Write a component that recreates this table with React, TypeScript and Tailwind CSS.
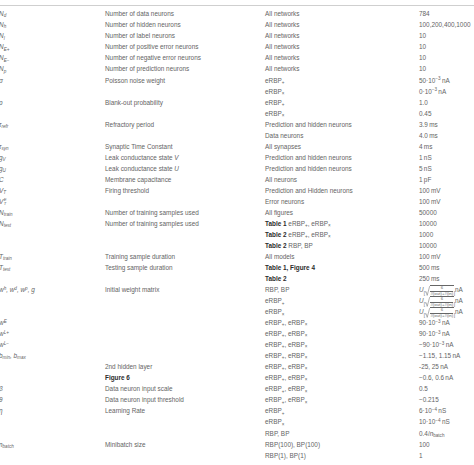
import type { ReactNode } from "react"

const Sb = ({ children, i = true }: { children: ReactNode; i?: boolean }) => (
  <sub className={`text-[4.6px] ${i ? "italic" : ""}`}>{children}</sub>
)
const Sp = ({ children }: { children: ReactNode }) => <sup className="text-[4.6px] italic">{children}</sup>

const Ep = () => (
  <>
    eRBP<Sb i={false}>+</Sb>
  </>
)
const Ex = () => (
  <>
    eRBP<Sb i={false}>×</Sb>
  </>
)
const Both = () => (
  <>
    <Ep />, <Ex />
  </>
)
const B = ({ children }: { children: ReactNode }) => <b className="font-bold text-[#2b2b2b]">{children}</b>

const Sym = ({ v, s }: { v: string; s: string }) => (
  <span className="italic">
    {v}
    <Sb>{s}</Sb>
  </span>
)

const Pow = ({ m, e, u }: { m: string; e: string; u: string }) => (
  <>
    {m}·10<sup className="text-[4.6px]">{e}</sup>
    {"\u2009"}
    {u}
  </>
)

function Uniform() {
  return (
    <span className="inline-flex items-center whitespace-nowrap">
      <i>U</i>
      <span className="text-[4.6px] self-end">[</span>
      <svg width="5" height="10" viewBox="0 0 5 10" className="shrink-0">
        <path d="M0 6.2 L1.1 5.6 L2.2 9.4 L4.6 0.4 L5 0.4" fill="none" stroke="#666" strokeWidth="0.5" />
      </svg>
      <span className="flex flex-col items-center border-t-[0.5px] border-[#666] leading-none pt-[0.5px] px-[0.5px]">
        <span className="text-[4.2px] leading-none">6</span>
        <span className="h-[0.5px] w-full bg-[#666] my-[0.5px]" />
        <span className="text-[4.4px] leading-none">#(out)+#(in)</span>
      </span>
      <span className="text-[4.6px] self-end">]</span>
      <span>nA</span>
    </span>
  )
}

type Row = [ReactNode, ReactNode, ReactNode, ReactNode]

const rows: Row[] = [
  [<Sym v="N" s="d" />, "Number of data neurons", "All networks", "784"],
  [<Sym v="N" s="h" />, "Number of hidden neurons", "All networks", "100,200,400,1000"],
  [<Sym v="N" s="l" />, "Number of label neurons", "All networks", "10"],
  [<Sym v="N" s="E+" />, "Number of positive error neurons", "All networks", "10"],
  [<Sym v="N" s="E−" />, "Number of negative error neurons", "All networks", "10"],
  [<Sym v="N" s="p" />, "Number of prediction neurons", "All networks", "10"],
  [<i>σ</i>, "Poisson noise weight", <Ep />, <Pow m="50" e="−3" u="nA" />],
  ["", "", <Ex />, <Pow m="0" e="−3" u="nA" />],
  [<i>p</i>, "Blank-out probability", <Ep />, "1.0"],
  ["", "", <Ex />, "0.45"],
  [<Sym v="τ" s="refr" />, "Refractory period", "Prediction and hidden neurons", "3.9\u2009ms"],
  ["", "", "Data neurons", "4.0\u2009ms"],
  [<Sym v="τ" s="syn" />, "Synaptic Time Constant", "All synapses", "4\u2009ms"],
  [
    <Sym v="g" s="V" />,
    <>
      Leak conductance state <i>V</i>
    </>,
    "Prediction and hidden neurons",
    "1\u2009nS",
  ],
  [
    <Sym v="g" s="U" />,
    <>
      Leak conductance state <i>U</i>
    </>,
    "Prediction and hidden neurons",
    "5\u2009nS",
  ],
  [<i>C</i>, "Membrane capacitance", "All neurons", "1\u2009pF"],
  [<Sym v="V" s="T" />, "Firing threshold", "Prediction and Hidden neurons", "100\u2009mV"],
  [
    <span className="inline-flex items-center italic">
      V
      <span className="flex flex-col text-[4.2px] leading-[3.8px] ml-[0.5px]">
        <span>E</span>
        <span>T</span>
      </span>
    </span>,
    "",
    "Error neurons",
    "100\u2009mV",
  ],
  [<Sym v="N" s="train" />, "Number of training samples used", "All figures", "50000"],
  [
    <Sym v="N" s="test" />,
    "Number of training samples used",
    <>
      <B>Table 1</B> <Both />
    </>,
    "10000",
  ],
  [
    "",
    "",
    <>
      <B>Table 2</B> <Both />
    </>,
    "1000",
  ],
  [
    "",
    "",
    <>
      <B>Table 2</B> RBP, BP
    </>,
    "10000",
  ],
  [<Sym v="T" s="train" />, "Training sample duration", "All models", "100\u2009mV"],
  [<Sym v="T" s="test" />, "Testing sample duration", <B>Table 1, Figure 4</B>, "500\u2009ms"],
  ["", "", <B>Table 2</B>, "250\u2009ms"],
  [
    <span className="italic">
      w<Sp>h</Sp>, w<Sp>d</Sp>, w<Sp>p</Sp>, g
    </span>,
    "Initial weight matrix",
    "RBP, BP",
    <Uniform />,
  ],
  ["", "", <Ep />, <Uniform />],
  ["", "", <Ex />, <Uniform />],
  [
    <span className="italic">
      w<Sp>E</Sp>
    </span>,
    "",
    <Both />,
    <Pow m="90" e="−3" u="nA" />,
  ],
  [
    <span className="italic">
      w<Sp>L+</Sp>
    </span>,
    "",
    <Both />,
    <Pow m="90" e="−3" u="nA" />,
  ],
  [
    <span className="italic">
      w<Sp>L−</Sp>
    </span>,
    "",
    <Both />,
    <Pow m="−90" e="−3" u="nA" />,
  ],
  [
    <span className="italic">
      b<Sb>min</Sb>, b<Sb>max</Sb>
    </span>,
    "",
    <Both />,
    "−1.15, 1.15\u2009nA",
  ],
  ["", "2nd hidden layer", <Both />, "-25, 25\u2009nA"],
  ["", <B>Figure 6</B>, <Both />, "−0.6, 0.6\u2009nA"],
  [<i>β</i>, "Data neuron input scale", <Both />, "0.5"],
  [<i>θ</i>, "Data neuron input threshold", <Both />, "−0.215"],
  [<i>η</i>, "Learning Rate", <Ep />, <Pow m="6" e="−4" u="nS" />],
  ["", "", <Ex />, <Pow m="10" e="−4" u="nS" />],
  [
    "",
    "",
    "RBP, BP",
    <>
      0.4/<i>n</i>
      <Sb i={false}>batch</Sb>
    </>,
  ],
  [<Sym v="n" s="batch" />, "Minibatch size", "RBP(100), BP(100)", "100"],
  ["", "", "RBP(1), BP(1)", "1"],
]

export default function App() {
  return (
    <div
      className="w-[474px] h-[465px] overflow-hidden bg-white text-[#646464] text-[6.4px] leading-none"
      style={{ fontFamily: '"Liberation Sans", Arial, sans-serif' }}
    >
      <div className="h-px bg-[#cfcfcf] mt-[5px]" />
      <div className="mt-[3px] ml-[-1px]">
        {rows.map((r, i) => (
          <div key={i} className="grid grid-cols-[106px_160px_154px_1fr] h-[11.04px] items-center whitespace-nowrap">
            <div>{r[0]}</div>
            <div>{r[1]}</div>
            <div>{r[2]}</div>
            <div>{r[3]}</div>
          </div>
        ))}
      </div>
    </div>
  )
}
